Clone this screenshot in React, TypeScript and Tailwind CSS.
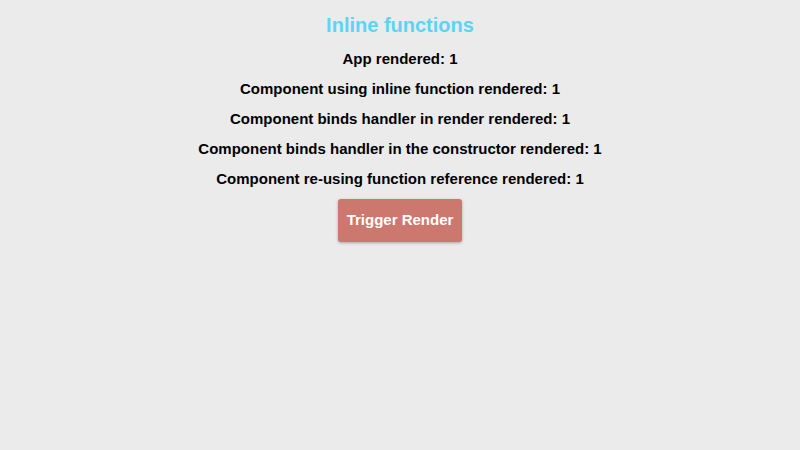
export default function App() {
  const lines = [
    "App rendered: 1",
    "Component using inline function rendered: 1",
    "Component binds handler in render rendered: 1",
    "Component binds handler in the constructor rendered: 1",
    "Component re-using function reference rendered: 1",
  ];
  return (
    <div className="min-h-[450px] bg-[#ebebeb] flex flex-col items-center pt-[11px] font-['Liberation_Sans',Arial,sans-serif] font-bold">
      <h1 className="text-[20px] leading-[28px] text-[#5dd4f6]">Inline functions</h1>
      <div className="mt-[5px] flex flex-col items-center">
        {lines.map((l) => (
          <p key={l} className="text-[15px] leading-[30px] text-black">
            {l}
          </p>
        ))}
      </div>
      <button className="mt-[5px] h-[43px] px-[9px] rounded-[3px] bg-[#cd786e] text-white text-[15px] shadow-[0_1px_3px_rgba(0,0,0,0.3)]">
        Trigger Render
      </button>
    </div>
  );
}
